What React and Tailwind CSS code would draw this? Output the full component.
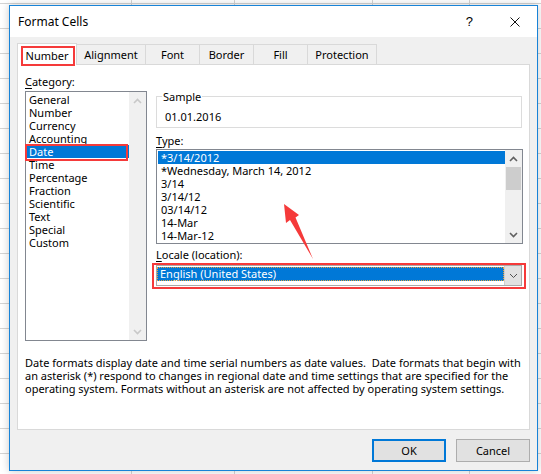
const CATEGORIES = ['General', 'Number', 'Currency', 'Accounting', 'Date', 'Time', 'Percentage', 'Fraction', 'Scientific', 'Text', 'Special', 'Custom']

const TYPES = ['*3/14/2012', '*Wednesday, March 14, 2012', '3/14', '3/14/12', '03/14/12', '14-Mar', '14-Mar-12']

const TABS = [
  { label: 'Alignment',  w: 'w-[70px]' },
  { label: 'Font',       w: 'w-[55px]' },
  { label: 'Border',     w: 'w-[55px]' },
  { label: 'Fill',       w: 'w-[55px]' },
  { label: 'Protection', w: 'w-[70px]' },
]

// ── Small pieces ──────────────────────────────────────────────────────────────
function Chevron({ up, color = '#606060', stroke = 1.6 }) {
  return (
    <svg width="9" height="6" viewBox="0 0 9 6">
      <polyline points={up ? '1,5 4.5,1.5 8,5' : '1,1 4.5,4.5 8,1'} fill="none" stroke={color} strokeWidth={stroke} />
    </svg>
  )
}

function ScrollBar({ disabled, thumb }) {
  const color = disabled ? '#c8c8c8' : '#606060'
  return (
    <div className="w-[17px] h-full bg-[#f0f0f0] flex flex-col shrink-0">
      <div className="h-[17px] flex items-center justify-center"><Chevron up color={color} /></div>
      <div className="flex-1 px-px">{thumb && <div className="h-[23px] bg-[#cdcdcd]" />}</div>
      <div className="h-[17px] flex items-center justify-center"><Chevron color={color} /></div>
    </div>
  )
}

function Label({ first, rest }) {
  return (
    <div className="h-[13px] leading-[13px]">
      <span className="underline underline-offset-2">{first}</span>{rest}
    </div>
  )
}

// ── Page ──────────────────────────────────────────────────────────────────────
export default function App() {
  return (
    <div className="relative w-[541px] h-[474px] overflow-hidden bg-white bg-[linear-gradient(to_right,transparent_131px,#d4d4d4_131px,#d4d4d4_132px,transparent_132px,transparent_234px,#d4d4d4_234px,#d4d4d4_235px,transparent_235px,transparent_372px,#d4d4d4_372px,#d4d4d4_373px,transparent_373px,transparent_469px,#d4d4d4_469px,#d4d4d4_470px,transparent_470px),linear-gradient(to_bottom,#d4d4d4_1px,transparent_1px)] bg-[length:100%_100%,100%_25px] bg-[position:0_0,0_3px] pl-[9px] pt-[5px] font-['Noto_Sans',sans-serif] text-[11px] leading-[13px] text-black">

      {/* Dialog window */}
      <div className="w-[529px] h-[466px] border border-[#1883d7] bg-[#f0f0f0] flex flex-col shadow-[0_0_8px_rgba(0,0,0,0.22)]">

        {/* Title bar */}
        <div className="h-[31px] bg-white flex items-center shrink-0">
          <span className="pl-[8px] text-[12px]">Format Cells</span>
          <span className="ml-auto text-[13px] font-['Liberation_Sans',sans-serif]">?</span>
          <svg className="ml-[37px] mr-[17px]" width="10" height="10" viewBox="0 0 10 10">
            <path d="M0.5 0.5 L9.5 9.5 M9.5 0.5 L0.5 9.5" stroke="#111" strokeWidth="1" />
          </svg>
        </div>

        {/* Body */}
        <div className="flex-1 px-[7px] pt-[6px] flex flex-col">

          {/* Tabs */}
          <div className="flex items-end h-[22px] -mb-px relative z-10">
            <div className="relative w-[60px] h-[22px] bg-white border border-b-0 border-[#d9d9d9] flex items-center justify-center pt-px">
              Number
              <span className="absolute left-[3px] right-[1px] top-[2px] -bottom-px border-2 border-[#f53a3a]" />
            </div>
            {TABS.map(t => (
              <div key={t.label} className={`${t.w} -ml-px h-[20px] mb-px border border-b-0 border-[#d9d9d9] flex items-center justify-center`}>
                {t.label}
              </div>
            ))}
          </div>

          {/* Panel */}
          <div className="h-[366px] border border-[#d9d9d9] bg-white pl-[7px] pt-[10px] flex flex-col">
            <div className="flex gap-[9px]">

              {/* Category */}
              <div className="w-[122px] flex flex-col">
                <Label first="C" rest="ategory:" />
                <div className="mt-[3px] h-[250px] border border-[#828790] flex">
                  <div className="flex-1 pt-px">
                    {CATEGORIES.map(c => (
                      <div key={c} className={`relative h-[13px] pl-[3px] ${c === 'Date' ? 'bg-[#0078d7] text-white' : ''}`}>
                        {c}
                        {c === 'Date' && <span className="absolute -left-px right-px -top-px -bottom-[3px] border-2 border-[#f53a3a]" />}
                      </div>
                    ))}
                  </div>
                  <ScrollBar disabled />
                </div>
              </div>

              {/* Right column */}
              <div className="w-[367px] flex flex-col">
                <div className="relative mt-[21px] mr-px h-[32px] border border-[#dcdcdc] pl-[8px] pt-[13px]">
                  <span className="absolute -top-[7px] left-[5px] bg-white px-px">Sample</span>
                  01.01.2016
                </div>

                <div className="mt-[6px]"><Label first="T" rest="ype:" /></div>
                <div className="mt-[2px] h-[95px] border border-[#828790] flex">
                  <div className="flex-1 pt-px">
                    {TYPES.map((t, i) => (
                      <div key={t} className={`h-[13px] ml-px pl-[3px] ${i === 0 ? 'bg-[#0078d7] text-white' : ''}`}>{t}</div>
                    ))}
                  </div>
                  <ScrollBar thumb />
                </div>

                <div className="mt-[4px]"><Label first="L" rest="ocale (location):" /></div>
                <div className="mt-[2px] -ml-[4px] -mr-[3px] h-[26px] border-2 border-[#f53a3a] px-[2px]">
                  <div className="h-[21px] border border-[#a9a9a9] bg-white flex">
                    <div className="flex-1 pt-px">
                      <div className="h-[14px] bg-[#0078d7] text-white pl-[3px] outline-1 outline-dotted outline-[#e8a23a] -outline-offset-1">
                        English (United States)
                      </div>
                    </div>
                    <div className="w-[17px] bg-[#e1e1e1] border-l border-[#cfcfcf] flex items-center justify-center">
                      <Chevron color="#505050" stroke={1} />
                    </div>
                  </div>
                </div>
              </div>
            </div>

            {/* Description */}
            <p className="mt-[15px] whitespace-nowrap">
              Date formats display date and time serial numbers as date values.&nbsp; Date formats that begin with<br />
              an asterisk (*) respond to changes in regional date and time settings that are specified for the<br />
              operating system. Formats without an asterisk are not affected by operating system settings.
            </p>
          </div>

          {/* Buttons */}
          <div className="mt-[9px] flex justify-end gap-[10px]">
            <button className="w-[74px] h-[23px] bg-[#e1e1e1] border-2 border-[#0078d7]">OK</button>
            <button className="w-[74px] h-[23px] bg-[#e1e1e1] border border-[#adadad]">Cancel</button>
          </div>
        </div>
      </div>

      {/* Annotation arrow */}
      <svg className="absolute left-0 top-0 pointer-events-none" width="541" height="474" viewBox="0 0 541 474">
        <path d="M284 204 L299 215 L295.5 217.5 L313 259 L290 220 L286 223 Z" fill="#f53a3a" />
      </svg>
    </div>
  )
}
